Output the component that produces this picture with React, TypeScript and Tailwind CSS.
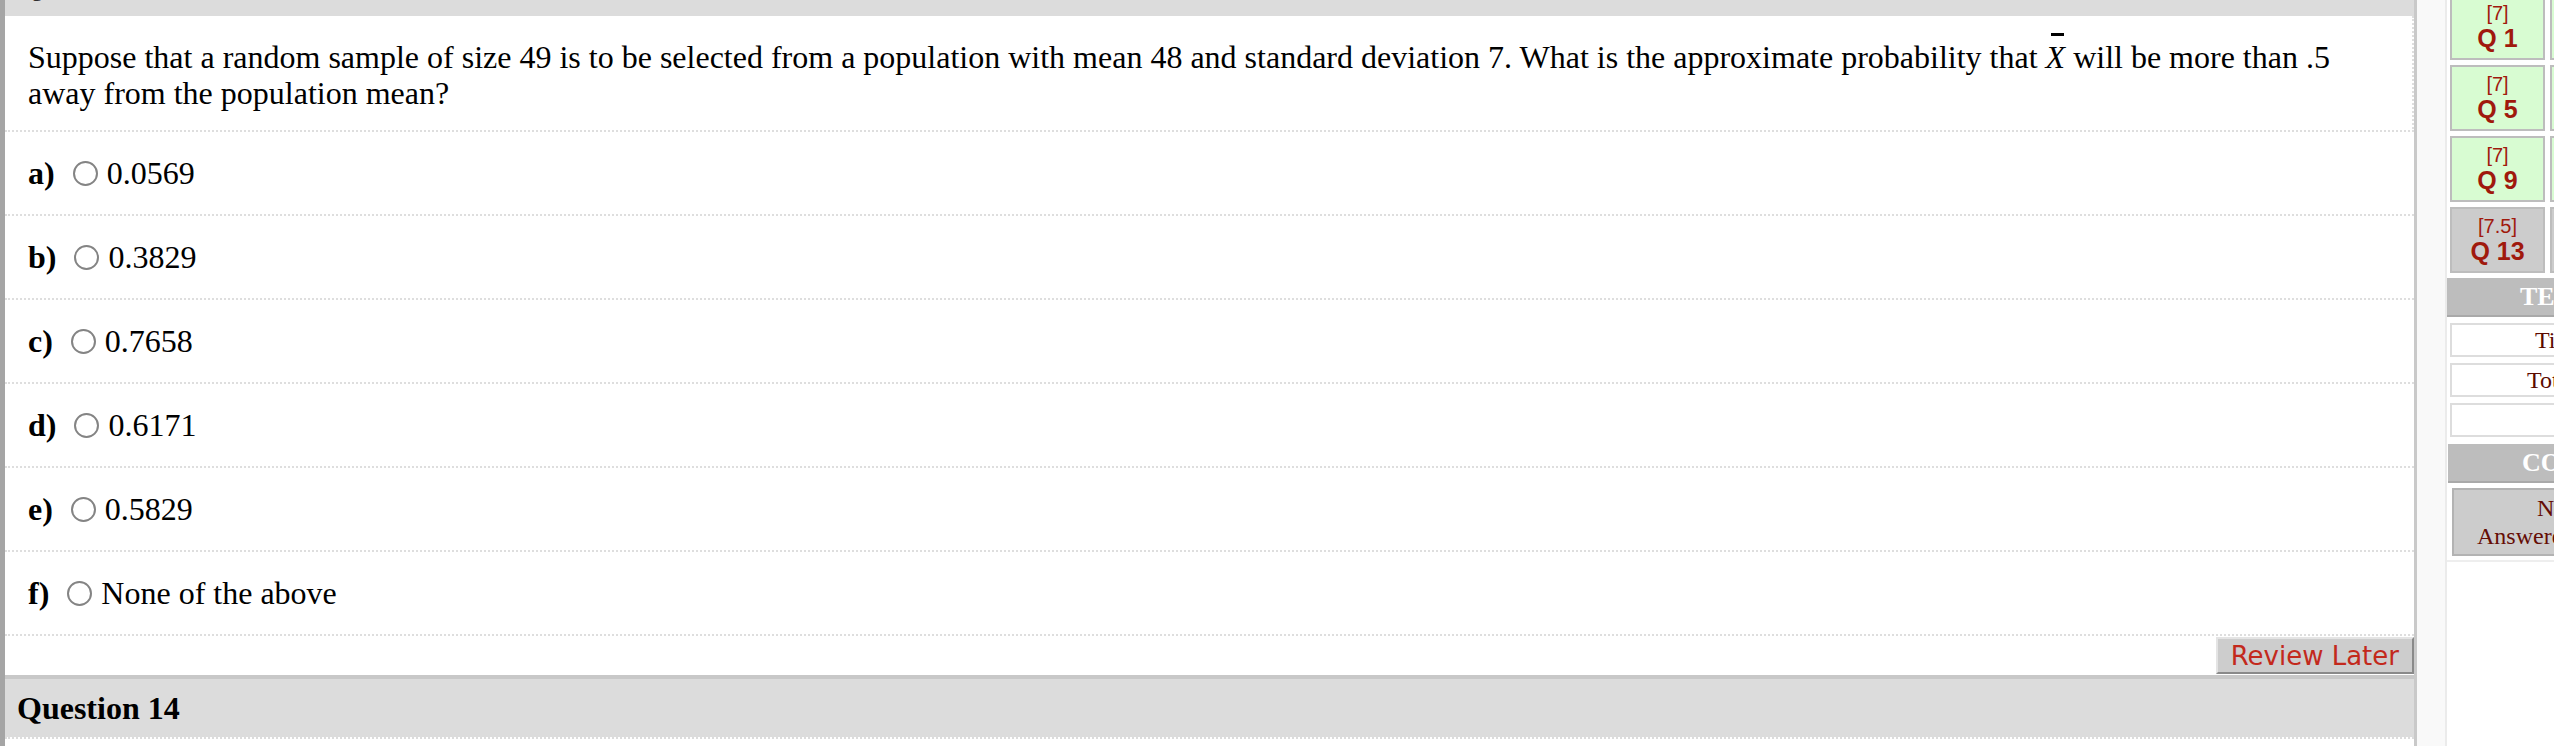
import React from "react";

const options = [
  ["a)", "0.0569"],
  ["b)", "0.3829"],
  ["c)", "0.7658"],
  ["d)", "0.6171"],
  ["e)", "0.5829"],
  ["f)", "None of the above"],
];

const qBoxes = Array.from({ length: 16 }, (_, i) => ({
  n: i + 1,
  mark: i < 12 ? "[7]" : "[7.5]",
  done: i < 12,
}));

const App = () => {
  return (
    <div className="flex h-[746px] w-full overflow-hidden bg-white text-black">
      {/* Question panel */}
      <main className="w-[2414px] shrink-0 border-l-[5px] border-[#a5a5a5] flex flex-col font-['Liberation_Serif','Times_New_Roman',serif]">
        {/* previous question header, scrolled off */}
        <div className="h-[16px] shrink-0 overflow-hidden bg-[#dcdcdc] border-b-2 border-dotted border-[#dcdcdc]">
          <div className="-mt-[33px] pl-[12px] text-[32px] font-bold leading-[37px]">
            Question 13
          </div>
        </div>

        {/* Question text */}
        <div className="pt-[23px] pb-[19px] pl-[23px] pr-[10px] text-[32px] leading-[36px] border-b-2 border-r-2 border-dotted border-[#dedede]">
          Suppose that a random sample of size 49 is to be selected from a
          population with mean 48 and standard deviation 7. What is the
          approximate probability that{" "}
          <span className="relative italic">
            X
            <span className="absolute left-[5px] -top-[6px] h-[3px] w-[13px] bg-black" />
          </span>{" "}
          will be more than .5
          <br />
          away from the population mean?
        </div>

        {/* Options */}
        {options.map(([label, text]) => (
          <div
            key={label}
            className="h-[84px] shrink-0 flex items-center pl-[23px] text-[32px] border-b-2 border-dotted border-[#dedede]"
          >
            <span className="font-bold mr-[18px]">{label}</span>
            <span className="w-[25px] h-[25px] rounded-full border-2 border-[#848484] bg-white mr-[9px]" />
            <span>{text}</span>
          </div>
        ))}

        {/* Review later */}
        <div className="h-[39px] shrink-0 flex justify-end pt-[1px]">
          <button className="h-[37px] px-[13px] bg-[#cdcdcd] border-2 border-t-[#e4e4e4] border-l-[#e4e4e4] border-b-[#8a8a8a] border-r-[#8a8a8a] text-[#c3291c] text-[26px] leading-none font-['DejaVu_Sans',Verdana,sans-serif]">
            Review Later
          </button>
        </div>

        {/* Next question header */}
        <div className="h-[62px] shrink-0 bg-[#dcdcdc] border-t-4 border-[#c8c8c8] flex items-center pl-[12px] text-[32px] font-bold">
          Question 14
        </div>
        <div className="border-t-2 border-dotted border-[#dcdcdc]" />
      </main>

      {/* Divider strip */}
      <div className="w-[3px] shrink-0 bg-[#c9c9c9]" />
      <div className="w-[30px] shrink-0 bg-[#f9f9f9] border-r-2 border-[#ebebeb]" />

      {/* Sidebar */}
      <aside className="w-[107px] shrink-0 overflow-hidden">
        <div className="w-[420px]">
          <div className="grid grid-cols-[repeat(4,95px)] gap-[5px] pl-[3px] -mt-[6px] pb-[5px]">
            {qBoxes.map((q) => (
              <div
                key={q.n}
                className={`h-[66px] border-2 border-[#bdbdbd] flex flex-col items-center justify-center text-[#a0190d] font-['Liberation_Sans',Arial,sans-serif] ${
                  q.done ? "bg-[#d8fcd2]" : "bg-[#cccccc]"
                }`}
              >
                <span className="text-[20px] leading-[23px]">{q.mark}</span>
                <span className="text-[25px] leading-[27px] font-bold">
                  Q {q.n}
                </span>
              </div>
            ))}
          </div>

          <div className="h-[39px] bg-[#bdbdbd] border-b-2 border-[#a9a9a9] flex items-center pl-[73px] text-white text-[26px] font-bold font-['Liberation_Serif','Times_New_Roman',serif]">
            TEST INFO
          </div>
          <div className="flex flex-col gap-[6px] pt-[6px] pb-[7px] pl-[3px] font-['Liberation_Serif','Times_New_Roman',serif] text-[24px] text-[#5c0b00]">
            <div className="h-[34px] w-[320px] border-2 border-[#dddddd] flex items-center pl-[83px]">
              Time Left: 00:41:27
            </div>
            <div className="h-[34px] w-[320px] border-2 border-[#dddddd] flex items-center pl-[75px]">
              Total Questions: 20
            </div>
            <div className="h-[34px] w-[320px] border-2 border-[#dddddd]" />
          </div>

          <div className="ml-[1px] h-[39px] bg-[#bdbdbd] border-b-2 border-[#a9a9a9] flex items-center pl-[74px] text-white text-[26px] font-bold font-['Liberation_Serif','Times_New_Roman',serif]">
            COLOR CODES
          </div>
          <div className="pt-[5px] pb-[4px] pl-[5px] border-b-2 border-[#eeeeee] font-['Liberation_Serif','Times_New_Roman',serif] text-[24px] leading-[28px] text-[#650d05]">
            <div className="h-[68px] w-[300px] bg-[#cccccc] border-2 border-[#b3b3b3] flex flex-col justify-center">
              <span className="pl-[83px]">Not</span>
              <span className="pl-[23px]">Answered Questions</span>
            </div>
          </div>
        </div>
      </aside>
    </div>
  );
};

export default App;
